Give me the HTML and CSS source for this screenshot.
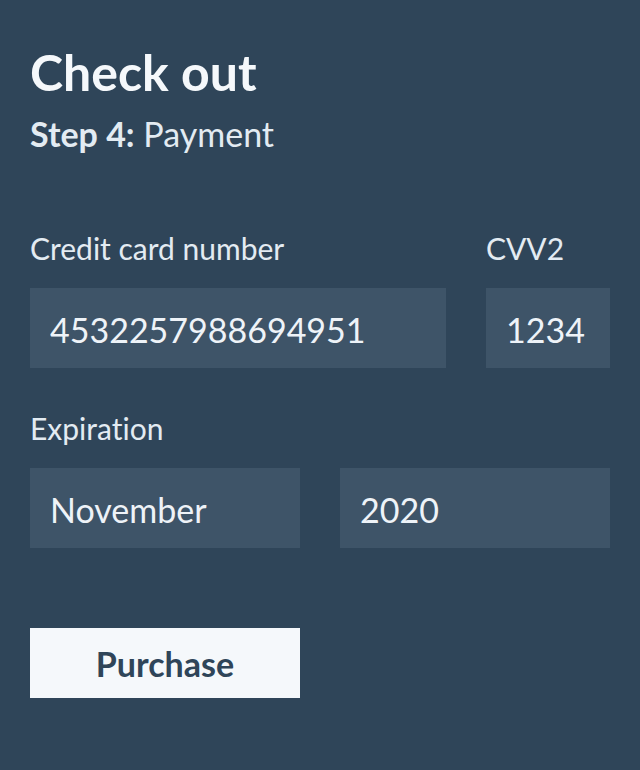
FILE: index.html
```html
<!DOCTYPE html>
<html lang="en">
<head>
    <meta charset="UTF-8">
    <meta name="viewport" content="width=device-width, initial-scale=1.0">
    <title>Check out</title>
    <link rel="stylesheet" href="styles.css">
</head>
<body>
    <div class="checkout">
        <h1 class="title">Check out</h1>
        <p class="step"><strong>Step 4:</strong> Payment</p>

        <form class="payment-form">
            <div class="row row-card">
                <div class="field">
                    <label for="card_number">Credit card number</label>
                    <input type="text" id="card_number" value="4532257988694951">
                </div>
                <div class="field">
                    <label for="cvv">CVV2</label>
                    <input type="text" id="cvv" value="1234">
                </div>
            </div>

            <div class="field-group">
                <label for="exp_month">Expiration</label>
                <div class="row row-expiry">
                    <input type="text" id="exp_month" value="November">
                    <input type="text" id="exp_year" value="2020">
                </div>
            </div>

            <div class="row row-expiry">
                <button type="submit" class="purchase-btn">Purchase</button>
            </div>
        </form>
    </div>
</body>
</html>
```

FILE: styles.css
```css
* {
    margin: 0;
    padding: 0;
    box-sizing: border-box;
}

body {
    font-family: 'Lato', 'Open Sans', sans-serif;
    font-variant-ligatures: none;
    background: #2f4559;
    color: #f5f8fb;
    min-height: 100vh;
}

.checkout {
    padding: 40px 30px;
}

.title {
    font-size: 50px;
    font-weight: 700;
    line-height: 64px;
}

.step {
    font-size: 34px;
    line-height: 60px;
    color: #e3ebf2;
    margin-bottom: 64px;
}

.step strong {
    font-weight: 700;
}

.row {
    display: grid;
    gap: 40px;
}

.row-card {
    grid-template-columns: 1fr 124px;
    margin-bottom: 40px;
}

.row-expiry {
    grid-template-columns: 1fr 1fr;
}

.field label,
.field-group label {
    display: block;
    font-size: 30px;
    line-height: 40px;
    margin-bottom: 20px;
    color: #e3ebf2;
}

input {
    display: block;
    width: 100%;
    height: 80px;
    padding: 2px 20px 0;
    border: none;
    background: #3e5468;
    color: #eef3f8;
    font-family: inherit;
    font-variant-ligatures: none;
    font-size: 34px;
    outline: none;
}

.field-group {
    margin-bottom: 80px;
}

.purchase-btn {
    height: 70px;
    border: none;
    background: #f5f8fb;
    color: #2f4559;
    font-family: inherit;
    font-size: 34px;
    font-weight: 700;
    cursor: pointer;
}
```
